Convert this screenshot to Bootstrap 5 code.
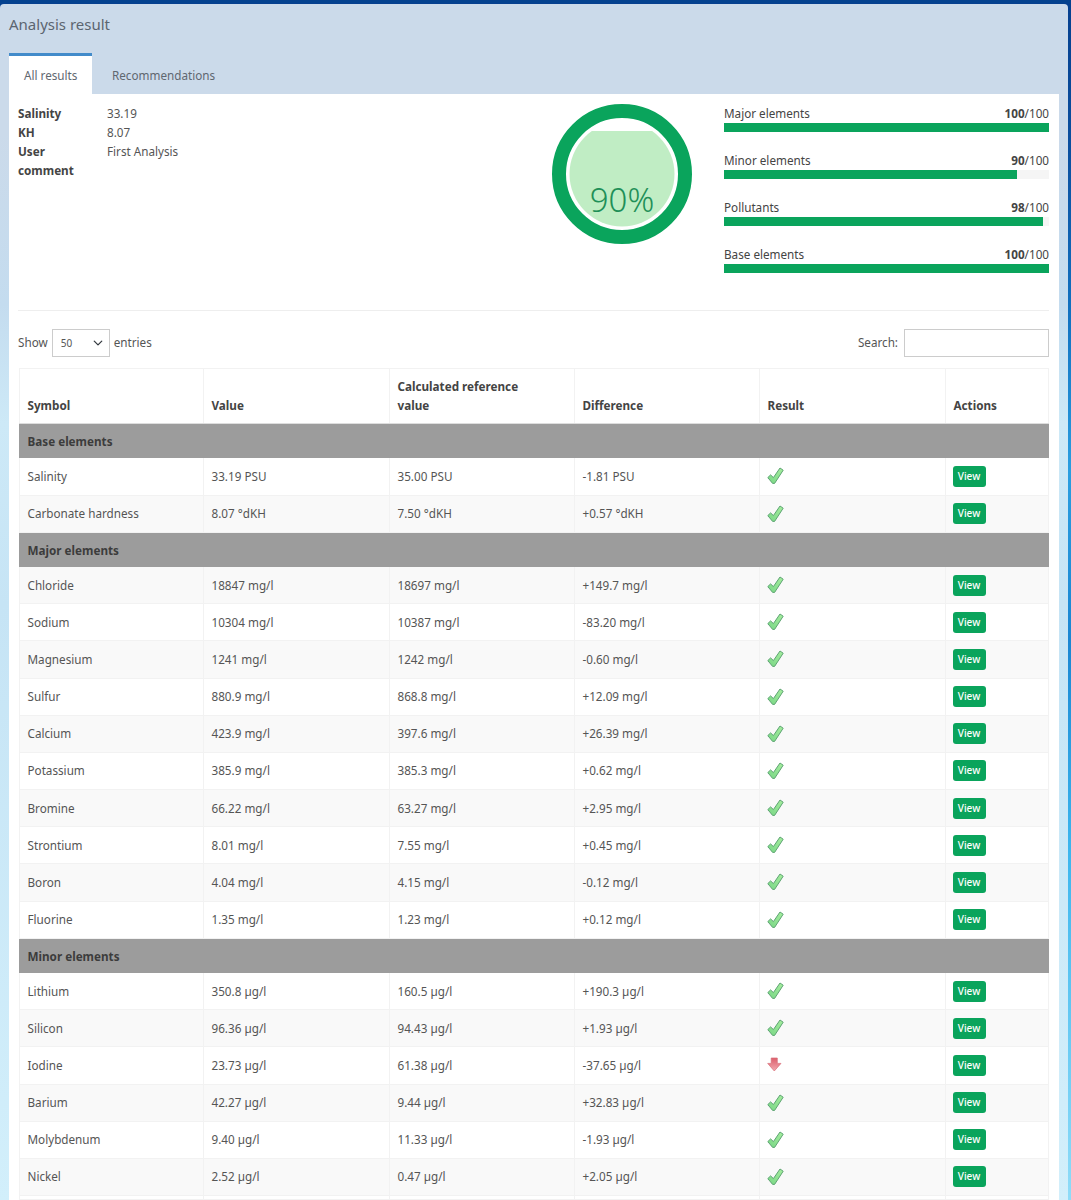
<!DOCTYPE html>
<html lang="en">
<head>
<meta charset="UTF-8">
<meta name="viewport" content="width=device-width, initial-scale=1.0">
<title>Analysis result</title>
<link href="https://cdn.jsdelivr.net/npm/bootstrap@5.3.3/dist/css/bootstrap.min.css" rel="stylesheet">
<style>
  html, body { height: 100%; }
  body {
    font-family: "Noto Sans", "Liberation Sans", sans-serif;
    font-size: 11.7px;
    line-height: 19px;
    color: #555;
    overflow: hidden;
    background: linear-gradient(180deg, #06408f 0, #0a4f9f 150px, #1273c2 320px, #2a9ee0 470px, #1a86d2 640px, #3cb6ee 850px, #8fdcf8 1200px);
    border-top: 3px solid #04428f;
  }
  .shell {
    margin: 1px 3px 0 0;
    padding: 0 9px;
    height: calc(100vh - 4px);
    overflow: hidden;
    background: linear-gradient(180deg, #cbdaea 0, #cbdaea 130px, #c4dcef 300px, #cde9f7 420px, #c6e4f5 600px, #d2effb 1200px);
    border-radius: 4px 4px 0 0;
  }
  .shell-title { font-size: 15px; line-height: 22px; color: #5b6570; padding: 9px 0 18px 0; }
  .tabs-bar { height: 41px; }
  .tab-on, .tab-off { display: block; height: 41px; padding: 13px 15px 0; text-decoration: none; color: #5f6770; white-space: nowrap; }
  .tab-on { width: 83px; background: #fff; border-top: 3px solid #428bca; padding-top: 10px; }
  .tab-off { padding-left: 20px; }
  .pane { background: #fff; padding: 10px 10px 0 9px; }
  .info-grid { display: grid; grid-template-columns: 89px 1fr; width: 200px; }
  .info-grid b { color: #444; font-weight: 700; padding-right: 20px; }
  .ring-box { width: 140px; height: 140px; }
  .score-side { width: 325px; margin-left: 32px; }
  .score-head { display: flex; justify-content: space-between; color: #444; line-height: 19px; }
  .score-head b { font-weight: 700; }
  .score-bar { height: 9px; border-radius: 0; background: #f5f5f5; margin-bottom: 19px; }
  .score-bar .progress-bar { background: #0aa45c; }
  .top-row { height: 206px; }
  .rule { border-top: 1px solid #eee; margin: 0; opacity: 1; }
  .filter-row { margin: 18px 0 11px; }
  .filter-label { margin-top: -2px; }
  .len-select { width: 58px; height: 28px; font-size: 10px; padding: 2px 8px; border-radius: 0; border-color: #ccc; color: #555; background-size: 12px 10px; background-position: right 5px center; }
  .search-box { width: 145px; height: 28px; border: 1px solid #ccc; margin-left: 2px; }
  .result-table { border-collapse: collapse; width: 1030px; table-layout: fixed; margin: 0 0 0 1px; }
  .result-table th, .result-table td { border: 1px solid #f2f2f2; padding: 8px 8px 8px 7.5px; font-size: 11.7px; line-height: 19px; color: #555; vertical-align: middle; }
  .result-table thead th { color: #444; font-weight: 700; vertical-align: bottom; border-bottom: 1px solid #ddd; padding-top: 8px; padding-bottom: 8px; }
  .result-table tbody td { height: 37.17px; padding-top: 6px; padding-bottom: 6px; }
  .result-table tr.even-row td { background: #f9f9f9; }
  .result-table tr.group-row td { background: #9c9c9c; color: #3c3c3c; font-weight: 700; border-color: #9c9c9c; height: 34.4px; padding-top: 7px; padding-bottom: 5px; }
  .result-table tr.tail-row td { height: 4px; padding: 0; }
  .view-btn { background: #0aa45c; color: #fff; font-size: 10px; font-weight: 500; line-height: 13px; padding: 4px 0; border: 0; border-radius: 3px; width: 33px; display: block; margin-left: -1px; }
  .res-icon { display: block; margin-left: -1px; }
  .c1 { width: 184px; } .c2 { width: 186px; } .c3 { width: 185px; } .c4 { width: 185px; } .c5 { width: 186px; }
</style>
</head>
<body>
  <div class="shell">
    <div class="shell-title">Analysis result</div>
    <div class="tabs-bar d-flex">
      <a class="tab-on" href="#">All results</a>
      <a class="tab-off" href="#">Recommendations</a>
    </div>
    <div class="pane">
      <div class="d-flex top-row">
        <div class="info-grid align-self-start">
          <b>Salinity</b><span>33.19</span>
          <b>KH</b><span>8.07</span>
          <b>User comment</b><span>First Analysis</span>
        </div>
        <div class="ms-auto ring-box">
          <svg width="140" height="140" viewBox="0 0 140 140">
            <circle cx="70" cy="70" r="63" fill="none" stroke="#0aa45c" stroke-width="14"/>
            <clipPath id="fillclip"><rect x="0" y="27" width="140" height="113"/></clipPath>
            <circle cx="70" cy="70" r="52.5" fill="#c0edc4" clip-path="url(#fillclip)"/>
            <text x="70" y="108" text-anchor="middle" font-family="Noto Sans, sans-serif" font-size="33" font-weight="300" fill="#1f9058">90%</text>
          </svg>
        </div>
        <div class="score-side" id="scores"></div>
      </div>
      <hr class="rule">
      <div class="d-flex justify-content-between align-items-center filter-row">
        <div class="d-flex align-items-center gap-1">
          <span class="filter-label">Show</span>
          <select class="form-select len-select"><option>50</option></select>
          <span class="filter-label">entries</span>
        </div>
        <div class="d-flex align-items-center gap-1">
          <span class="filter-label">Search:</span>
          <input class="search-box" type="text">
        </div>
      </div>
      <table class="result-table">
        <colgroup><col class="c1"><col class="c2"><col class="c3"><col class="c4"><col class="c5"><col></colgroup>
        <thead>
          <tr><th>Symbol</th><th>Value</th><th>Calculated reference<br>value</th><th>Difference</th><th>Result</th><th>Actions</th></tr>
        </thead>
        <tbody id="rows"></tbody>
      </table>
    </div>
  </div>

  <svg width="0" height="0" class="position-absolute">
    <defs>
      <linearGradient id="okFill" x1="1" y1="0" x2="0" y2="1"><stop offset="0" stop-color="#a6ee9e"/><stop offset="1" stop-color="#78d685"/></linearGradient>
      <linearGradient id="badFill" x1="0" y1="0" x2="0" y2="1"><stop offset="0" stop-color="#dc5f6c"/><stop offset="1" stop-color="#f2aab0"/></linearGradient>
    </defs>
  </svg>

  <script>
    const check = `<svg class="res-icon" width="17" height="18" viewBox="0 0 17 18"><path d="M.8 10.6 L3.6 7.9 L6.4 10.6 L13 1 L16.2 3.2 L7.6 16.4 L5.6 16.4 Z" fill="url(#okFill)" stroke="#5fa474" stroke-width="1" stroke-linejoin="round"/></svg>`;
    const down = `<svg class="res-icon" width="15" height="16" viewBox="0 0 15 16"><path d="M4.2 1 H10.3 V6.4 H14 L7.3 14 L.7 6.4 H4.2 Z" fill="url(#badFill)" stroke="#d9707a" stroke-width=".7" stroke-linejoin="round"/></svg>`;

    const scores = [["Major elements", 100], ["Minor elements", 90], ["Pollutants", 98], ["Base elements", 100]];
    document.getElementById("scores").innerHTML = scores.map(s => `
      <div class="score-head"><span>${s[0]}</span><span><b>${s[1]}</b>/100</span></div>
      <div class="progress score-bar"><div class="progress-bar" style="width:${s[1]}%"></div></div>`).join("");

    const groups = [
      ["Base elements", [
        ["Salinity", "33.19 PSU", "35.00 PSU", "-1.81 PSU"],
        ["Carbonate hardness", "8.07 °dKH", "7.50 °dKH", "+0.57 °dKH"]]],
      ["Major elements", [
        ["Chloride", "18847 mg/l", "18697 mg/l", "+149.7 mg/l"],
        ["Sodium", "10304 mg/l", "10387 mg/l", "-83.20 mg/l"],
        ["Magnesium", "1241 mg/l", "1242 mg/l", "-0.60 mg/l"],
        ["Sulfur", "880.9 mg/l", "868.8 mg/l", "+12.09 mg/l"],
        ["Calcium", "423.9 mg/l", "397.6 mg/l", "+26.39 mg/l"],
        ["Potassium", "385.9 mg/l", "385.3 mg/l", "+0.62 mg/l"],
        ["Bromine", "66.22 mg/l", "63.27 mg/l", "+2.95 mg/l"],
        ["Strontium", "8.01 mg/l", "7.55 mg/l", "+0.45 mg/l"],
        ["Boron", "4.04 mg/l", "4.15 mg/l", "-0.12 mg/l"],
        ["Fluorine", "1.35 mg/l", "1.23 mg/l", "+0.12 mg/l"]]],
      ["Minor elements", [
        ["Lithium", "350.8 µg/l", "160.5 µg/l", "+190.3 µg/l"],
        ["Silicon", "96.36 µg/l", "94.43 µg/l", "+1.93 µg/l"],
        ["Iodine", "23.73 µg/l", "61.38 µg/l", "-37.65 µg/l", "down"],
        ["Barium", "42.27 µg/l", "9.44 µg/l", "+32.83 µg/l"],
        ["Molybdenum", "9.40 µg/l", "11.33 µg/l", "-1.93 µg/l"],
        ["Nickel", "2.52 µg/l", "0.47 µg/l", "+2.05 µg/l"]]]
    ];

    // striping counts the group rows too, same as the table in the picture
    let html = "";
    let n = 0;
    groups.forEach(g => {
      n++;
      html += `<tr class="group-row"><td colspan="6">${g[0]}</td></tr>`;
      g[1].forEach(r => {
        n++;
        const shade = n % 2 === 1 ? "even-row" : "";
        html += `<tr class="${shade}"><td>${r[0]}</td><td>${r[1]}</td><td>${r[2]}</td><td>${r[3]}</td><td>${r[4] === "down" ? down : check}</td><td><button class="view-btn">View</button></td></tr>`;
      });
    });
    html += `<tr class="tail-row"><td></td><td></td><td></td><td></td><td></td><td></td></tr>`;
    document.getElementById("rows").innerHTML = html;
  </script>
  <script src="https://cdn.jsdelivr.net/npm/bootstrap@5.3.3/dist/js/bootstrap.bundle.min.js"></script>
</body>
</html>
